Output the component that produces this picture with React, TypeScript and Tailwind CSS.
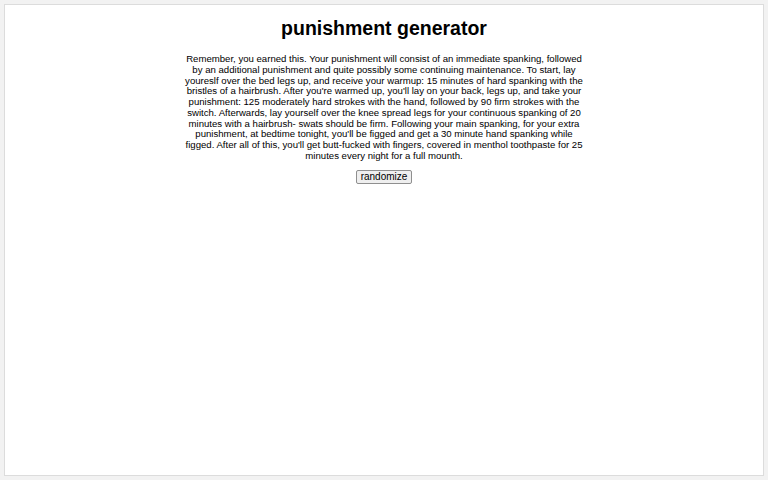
import { useState } from "react";

const TEXT =
  "Remember, you earned this. Your punishment will consist of an immediate spanking, followed by an additional punishment and quite possibly some continuing maintenance. To start, lay youreslf over the bed legs up, and receive your warmup: 15 minutes of hard spanking with the bristles of a hairbrush. After you're warmed up, you'll lay on your back, legs up, and take your punishment: 125 moderately hard strokes with the hand, followed by 90 firm strokes with the switch. Afterwards, lay yourself over the knee spread legs for your continuous spanking of 20 minutes with a hairbrush- swats should be firm. Following your main spanking, for your extra punishment, at bedtime tonight, you'll be figged and get a 30 minute hand spanking while figged. After all of this, you'll get butt-fucked with fingers, covered in menthol toothpaste for 25 minutes every night for a full mounth.";

export default function App() {
  const [text, setText] = useState(TEXT);

  return (
    <div className="h-[480px] w-[768px] bg-[#f2f2f2] p-1 font-['Liberation_Sans',Arial,sans-serif] text-black">
      <div className="flex h-full flex-col items-center border border-[#dcdcdc] bg-white">
        <h1 className="mt-[11px] text-[19.5px] font-bold leading-[24px]">
          punishment generator
        </h1>
        <p className="mt-[14px] w-[400px] text-center text-[9.6px] leading-[10.75px]">
          {text}
        </p>
        <button
          type="button"
          onClick={() => setText(TEXT)}
          className="mt-[8px] rounded-[2px] border border-[#8f8f8f] bg-[#efefef] px-[4px] text-[10px] leading-[12px]"
        >
          randomize
        </button>
      </div>
    </div>
  );
}
